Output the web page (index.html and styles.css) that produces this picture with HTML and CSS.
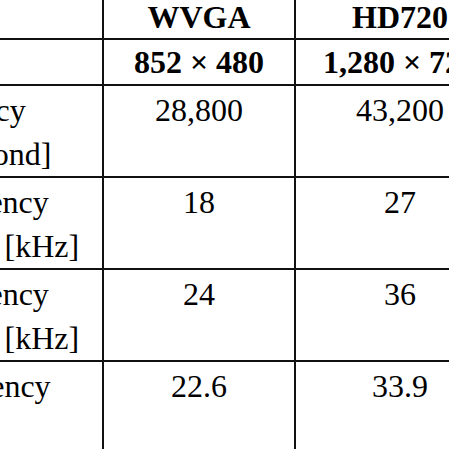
FILE: index.html
```html
<!DOCTYPE html>
<html lang="en">
<head>
<meta charset="utf-8">
<title>Resolution table</title>
<link rel="stylesheet" href="styles.css">
</head>
<body>
<div class="page">
  <div class="grid">
    <div class="cell head label"></div>
    <div class="cell head value">WVGA</div>
    <div class="cell head value">HD720</div>

    <div class="cell sub label"></div>
    <div class="cell sub value">852 × 480</div>
    <div class="cell sub value">1,280 × 720</div>

    <div class="cell body label">Line Frequency<br>[lines per second]</div>
    <div class="cell body value">28,800</div>
    <div class="cell body value">43,200</div>

    <div class="cell body label">Frame Frequency<br>in RGB Field [kHz]</div>
    <div class="cell body value">18</div>
    <div class="cell body value">27</div>

    <div class="cell body label">Vsync Frequency<br>in RGB Field [kHz]</div>
    <div class="cell body value">24</div>
    <div class="cell body value">36</div>

    <div class="cell body last label">Strobe Frequency</div>
    <div class="cell body last value">22.6</div>
    <div class="cell body last value">33.9</div>
  </div>
</div>
</body>
</html>
```
FILE: styles.css
```css
html, body {
  margin: 0;
  padding: 0;
  background: #ffffff;
}

.page {
  width: 449px;
  height: 449px;
  overflow: hidden;
  position: relative;
}

.grid {
  display: grid;
  grid-template-columns: 294px 192px 210px;
  margin-left: -190px;
  width: 696px;
  font-family: "Liberation Serif", "Times New Roman", serif;
  font-size: 32px;
  line-height: 44px;
  color: #000;
}

.cell {
  box-sizing: border-box;
  border-right: 2px solid #111;
  border-bottom: 2px solid #111;
  white-space: nowrap;
}

.label {
  padding-left: 14px;
  text-align: left;
}

.value {
  text-align: center;
}

.head,
.sub {
  font-weight: bold;
}

.head {
  line-height: 34px;
  padding-bottom: 4px;
}

.body {
  padding-top: 2px;
  min-height: 92px;
}

.last {
  min-height: 100px;
}
```
